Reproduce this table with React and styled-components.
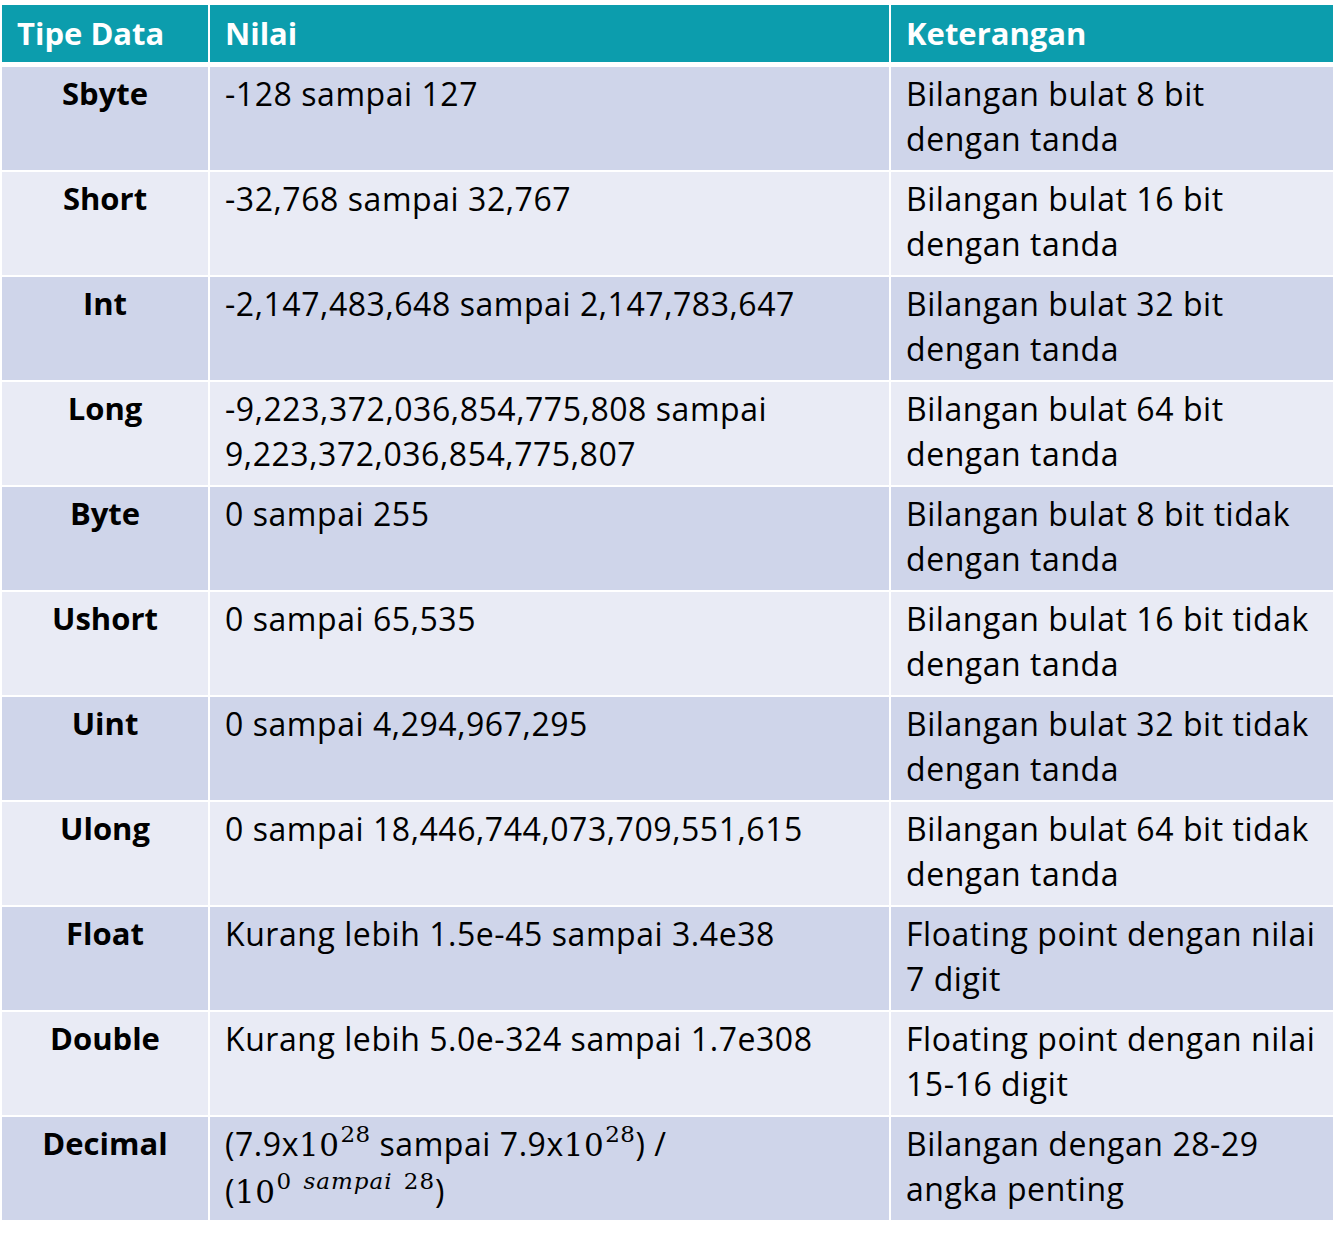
import React from "react";
import styled, { createGlobalStyle } from "styled-components";

const rows = [
  ["Sbyte", "-128 sampai 127", "Bilangan bulat 8 bit dengan tanda"],
  ["Short", "-32,768 sampai 32,767", "Bilangan bulat 16 bit dengan tanda"],
  ["Int", "-2,147,483,648 sampai 2,147,783,647", "Bilangan bulat 32 bit dengan tanda"],
  ["Long", "-9,223,372,036,854,775,808 sampai 9,223,372,036,854,775,807", "Bilangan bulat 64 bit dengan tanda"],
  ["Byte", "0 sampai 255", "Bilangan bulat 8 bit tidak dengan tanda"],
  ["Ushort", "0 sampai 65,535", "Bilangan bulat 16 bit tidak dengan tanda"],
  ["Uint", "0 sampai 4,294,967,295", "Bilangan bulat 32 bit tidak dengan tanda"],
  ["Ulong", "0 sampai 18,446,744,073,709,551,615", "Bilangan bulat 64 bit tidak dengan tanda"],
  ["Float", "Kurang lebih 1.5e-45 sampai 3.4e38", "Floating point dengan nilai 7 digit"],
  ["Double", "Kurang lebih 5.0e-324 sampai 1.7e308", "Floating point dengan nilai 15-16 digit"],
];

const DecimalValue = () => (
  <>
    (7.9x<M>10</M>
    <Sup>28</Sup> sampai 7.9x<M>10</M>
    <Sup>28</Sup>) /
    <br />
    (<M>10</M>
    <Sup $wide>
      0 <i>sampai</i> 28
    </Sup>
    )
  </>
);

const App = () => {
  return (
    <>
      <GlobalStyle />
      <Table>
        <HeadCell>Tipe Data</HeadCell>
        <HeadCell>Nilai</HeadCell>
        <HeadCell>Keterangan</HeadCell>
        {rows.map(([type, value, note], i) => (
          <React.Fragment key={type}>
            <TypeCell $odd={i % 2 === 0}>{type}</TypeCell>
            <Cell $odd={i % 2 === 0}>{value}</Cell>
            <Cell $odd={i % 2 === 0}>{note}</Cell>
          </React.Fragment>
        ))}
        <TypeCell $odd>Decimal</TypeCell>
        <Cell $odd>
          <DecimalValue />
        </Cell>
        <Cell $odd>Bilangan dengan 28-29 angka penting</Cell>
      </Table>
    </>
  );
};

const GlobalStyle = createGlobalStyle`
  body {
    margin: 0;
    background: #ffffff;
    font-family: "Open Sans", "Noto Sans", sans-serif;
  }
`;

const Table = styled.div`
  display: grid;
  grid-template-columns: 206px 679px 442px;
  grid-template-rows: 60px repeat(11, 103px);
  column-gap: 2px;
  row-gap: 2px;
  width: 1331px;
  margin: 5px 0 0 2px;
`;

const HeadCell = styled.div`
  background: #0c9dad;
  color: #ffffff;
  font-weight: 700;
  font-size: 31px;
  line-height: 57px;
  height: 57px;
  padding: 0 15px;
`;

const Cell = styled.div`
  background: ${(p) => (p.$odd ? "#cfd5ea" : "#e9ebf5")};
  color: #000000;
  font-size: 32px;
  line-height: 45px;
  padding: 4px 8px 0 15px;
  letter-spacing: 0.55px;
`;

const TypeCell = styled(Cell)`
  font-weight: 700;
  font-size: 31px;
  text-align: center;
  padding: 4px 2px 0 2px;
  letter-spacing: 0;
`;

const M = styled.span`
  font-family: "DejaVu Serif", "Liberation Serif", serif;
  font-size: 31px;
  letter-spacing: 0.5px;
`;

const Sup = styled.sup`
  font-family: "DejaVu Serif", "Liberation Serif", serif;
  font-size: 23px;
  line-height: 0;
  letter-spacing: ${(p) => (p.$wide ? "1px" : "0.5px")};
  word-spacing: ${(p) => (p.$wide ? "3px" : "0")};
  vertical-align: 14px;
  margin-left: 1px;
`;

export default App;
